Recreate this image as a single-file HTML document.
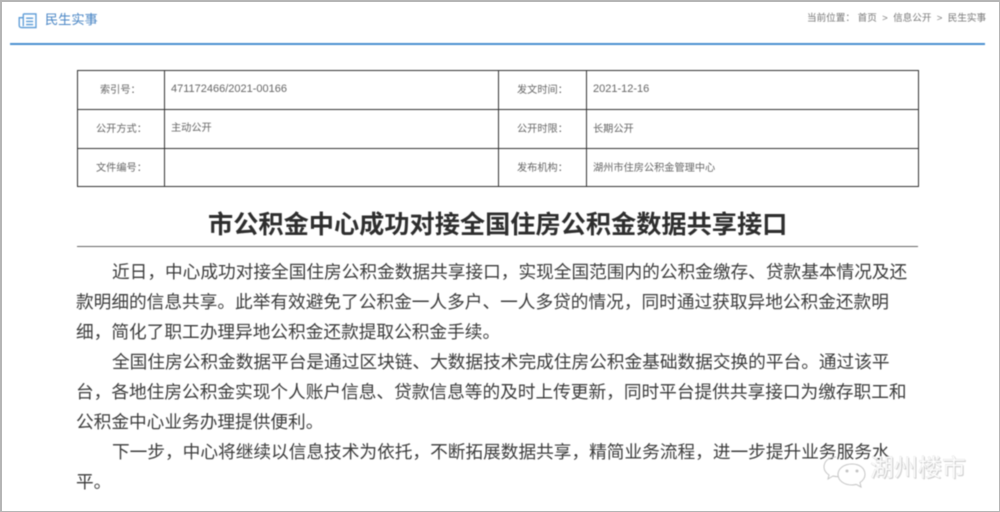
<!DOCTYPE html>
<html lang="zh"><head><meta charset="utf-8"><title>市公积金中心成功对接全国住房公积金数据共享接口</title>
<style>
html,body{margin:0;padding:0;background:#fff}
body{width:1000px;height:512px;position:relative;overflow:hidden;font-family:"Liberation Sans","Noto Sans CJK SC",sans-serif}
.a{position:absolute;white-space:nowrap}
.frame{left:0;top:0;width:997px;height:509px;border:solid #b5b5b5;border-width:2px 1px 1px 2px}
.l{position:absolute;background:#333}
.c{font-size:10.2px;color:#666;line-height:14px;transform:translateY(-50%)}
.n{font-size:11px}
.t{font-size:17.68px;color:#3c3c3c;line-height:24px;transform:translateY(-50%)}
.inner{filter:blur(.4px);position:absolute;left:0;top:0;width:1000px;height:512px}
</style></head><body>
<div class="a frame"></div>
<div class="inner">
<svg class="a" style="left:18px;top:13px" width="19" height="16" viewBox="0 0 20 17" fill="none" stroke="#5a9ad6" stroke-width="1.4"><path d="M5.500 1h13.500v14.500H3.500A2.300 2.300 0 0 1 1.200 13V5H5.500"/><path d="M5.500 1v13"/><path d="M8.500 5.500h7.500M8.500 9h7.500M8.500 12.300h7.500"/></svg>
<div class="a" style="left:45px;top:10px;font-size:13.2px;line-height:20px;color:#4a86c5">民生实事</div>
<div class="a" style="left:807px;top:10px;font-size:9.6px;line-height:14px;color:#777;padding-top:2px">当前位置：&nbsp;首页 &nbsp;&gt;&nbsp; 信息公开 &nbsp;&gt;&nbsp; 民生实事</div>
<div class="a" style="left:10px;top:43px;width:975px;height:2px;background:#4a90d0"></div>

<div class="l" style="left:77px;top:70px;width:842px;height:1px"></div>
<div class="l" style="left:77px;top:109px;width:842px;height:1px"></div>
<div class="l" style="left:77px;top:148px;width:842px;height:1px"></div>
<div class="l" style="left:77px;top:186px;width:842px;height:1px"></div>
<div class="l" style="left:77px;top:70px;width:1px;height:117px"></div>
<div class="l" style="left:164px;top:70px;width:1px;height:117px"></div>
<div class="l" style="left:498px;top:70px;width:1px;height:117px"></div>
<div class="l" style="left:586px;top:70px;width:1px;height:117px"></div>
<div class="l" style="left:918px;top:70px;width:1px;height:117px"></div>

<div class="a c" style="left:100px;top:91px">索引号：</div>
<div class="a c n" style="left:171px;top:89px">471172466/2021-00166</div>
<div class="a c" style="left:96px;top:130px">公开方式：</div>
<div class="a c" style="left:171px;top:129px">主动公开</div>
<div class="a c" style="left:96px;top:169px">文件编号：</div>
<div class="a c" style="left:517px;top:91px">发文时间：</div>
<div class="a c n" style="left:593px;top:89px">2021-12-16</div>
<div class="a c" style="left:517px;top:130px">公开时限：</div>
<div class="a c" style="left:593px;top:130px">长期公开</div>
<div class="a c" style="left:517px;top:169px">发布机构：</div>
<div class="a c" style="left:593px;top:169px">湖州市住房公积金管理中心</div>

<div class="a" style="left:208px;top:209px;font-size:25.2px;line-height:32px;font-weight:700;color:#2e2e2e">市公积金中心成功对接全国住房公积金数据共享接口</div>
<div class="a" style="left:77px;top:246px;width:841px;height:1px;background:#666"></div>

<div class="a t" style="left:112px;top:271.500px">近日，中心成功对接全国住房公积金数据共享接口，实现全国范围内的公积金缴存、贷款基本情况及还</div>
<div class="a t" style="left:76px;top:301.500px">款明细的信息共享。此举有效避免了公积金一人多户、一人多贷的情况，同时通过获取异地公积金还款明</div>
<div class="a t" style="left:76px;top:331.500px">细，简化了职工办理异地公积金还款提取公积金手续。</div>
<div class="a t" style="left:112px;top:361.500px">全国住房公积金数据平台是通过区块链、大数据技术完成住房公积金基础数据交换的平台。通过该平</div>
<div class="a t" style="left:76px;top:391.500px">台，各地住房公积金实现个人账户信息、贷款信息等的及时上传更新，同时平台提供共享接口为缴存职工和</div>
<div class="a t" style="left:76px;top:421.500px">公积金中心业务办理提供便利。</div>
<div class="a t" style="left:112px;top:451.500px">下一步，中心将继续以信息技术为依托，不断拓展数据共享，精简业务流程，进一步提升业务服务水</div>
<div class="a t" style="left:76px;top:481.500px">平。</div>

<svg class="a" style="left:822px;top:456px" width="46" height="32" viewBox="0 0 46 32" fill="#fff" stroke="#c4c4c4" stroke-width="1"><path d="M14 1C7 1 2 5 2 11c0 3 2 6 5 8l-1 4 5-3c2 .5 4 .7 6 .5" fill="none"/><path d="M30 8c-8 0-14 4.500-14 10.500S22 29 30 29c1.500 0 3-.2 4.300-.6L39 31l-1-4.500c3-2 5-4.800 5-8C43 12.500 38 8 30 8z"/><circle cx="25" cy="15" r="1" fill="#c4c4c4"/><circle cx="35" cy="15" r="1" fill="#c4c4c4"/></svg>
<div class="a" style="left:870px;top:453px;font-size:24px;line-height:32px;color:#fff;-webkit-text-stroke:.2px #c4c4c4;text-shadow:1px 1px 0 #d0d0d0">湖州楼市</div>
</div>
</body></html>
